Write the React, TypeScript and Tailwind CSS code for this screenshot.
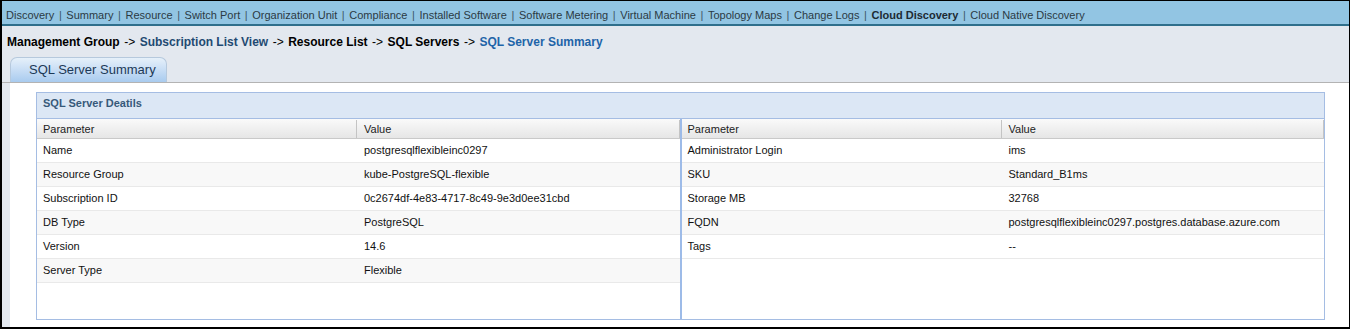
import React from 'react';

const navItems = [
  'Discovery',
  'Summary',
  'Resource',
  'Switch Port',
  'Organization Unit',
  'Compliance',
  'Installed Software',
  'Software Metering',
  'Virtual Machine',
  'Topology Maps',
  'Change Logs',
  'Cloud Discovery',
  'Cloud Native Discovery',
];

const leftRows = [
  ['Name', 'postgresqlflexibleinc0297'],
  ['Resource Group', 'kube-PostgreSQL-flexible'],
  ['Subscription ID', '0c2674df-4e83-4717-8c49-9e3d0ee31cbd'],
  ['DB Type', 'PostgreSQL'],
  ['Version', '14.6'],
  ['Server Type', 'Flexible'],
];

const rightRows = [
  ['Administrator Login', 'ims'],
  ['SKU', 'Standard_B1ms'],
  ['Storage MB', '32768'],
  ['FQDN', 'postgresqlflexibleinc0297.postgres.database.azure.com'],
  ['Tags', '--'],
];

const DetailTable = ({ rows }: { rows: string[][] }) => (
  <div className="flex-1 flex flex-col bg-white">
    {/* header row */}
    <div className="flex h-[20px] border-b border-[#c9c9c9] bg-gradient-to-b from-[#fafafa] to-[#e6e6e6] text-[#222] pt-[1px]">
      <div className="w-[320px] pl-[6px] flex items-center border-r border-[#c4c4c4]">Parameter</div>
      <div className="flex-1 pl-[7px] flex items-center border-r border-[#c4c4c4]">Value</div>
    </div>
    {rows.map(([k, v], i) => (
      <div
        key={k}
        className={`flex h-[24px] items-center pb-[1px] border-b border-[#e9e9e9] text-[#111] ${i % 2 === 1 ? 'bg-[#f8f8f8]' : 'bg-white'}`}
      >
        <div className="w-[320px] pl-[6px]">{k}</div>
        <div className="flex-1 pl-[7px]">{v}</div>
      </div>
    ))}
  </div>
);

export default function App() {
  return (
    <div
      className="w-[1350px] h-[329px] overflow-hidden bg-[#e3e8ef] border-l-2 border-t border-r border-b-2 border-black flex flex-col"
      style={{ fontFamily: '"Liberation Sans", Arial, sans-serif' }}
    >
      {/* Top nav */}
      <div className="h-[25px] shrink-0 bg-[#92c5e3] border-b-2 border-[#2f6f8c] flex items-center pt-[5px] pl-[4px] text-[11px] text-[#2b3a44]">
        {navItems.map((item, i) => (
          <React.Fragment key={item}>
            {i > 0 && <span className="px-[4.6px] text-[#3d5566]">|</span>}
            <span className={item === 'Cloud Discovery' ? 'font-bold text-[#1d2a33]' : ''}>{item}</span>
          </React.Fragment>
        ))}
      </div>

      {/* Breadcrumb */}
      <div className="h-[31px] shrink-0 flex items-center pl-[5px] pt-[1px] text-[12px] font-bold gap-[4.5px]">
        <span className="text-black">Management Group</span>
        <span className="font-normal">-&gt;</span>
        <span className="text-[#1f4a72]">Subscription List View</span>
        <span className="font-normal">-&gt;</span>
        <span className="text-black">Resource List</span>
        <span className="font-normal">-&gt;</span>
        <span className="text-black">SQL Servers</span>
        <span className="font-normal">-&gt;</span>
        <span className="text-[#1e64a8]">SQL Server Summary</span>
      </div>

      {/* Tab strip */}
      <div className="h-[26px] shrink-0 pl-[8px] flex items-end border-b border-[#b3b3b3]">
        <div className="w-[157px] h-[25px] rounded-t-[7px] border border-b-0 border-[#b6c9dd] bg-gradient-to-b from-[#e6f0fa] to-[#a9cbef] text-[13px] text-[#1c3957] flex items-center pl-[18px]">
          SQL Server Summary
        </div>
      </div>

      {/* Content */}
      <div className="flex-1 ml-[8px] bg-white pt-[9px] pl-[26px] pr-[24px] pb-[7px] flex">
        <div className="flex-1 flex flex-col border border-[#a5bde3] text-[11px]">
          <div className="h-[26px] shrink-0 bg-[#dce7f5] border-b border-[#a5bde3] flex items-center pb-[5px] pl-[6px] font-bold text-[#37597a]">
            SQL Server Deatils
          </div>
          <div className="flex-1 flex">
            <DetailTable rows={leftRows} />
            <div className="w-[2px] bg-[#9dbbe8]" />
            <DetailTable rows={rightRows} />
          </div>
        </div>
      </div>
    </div>
  );
}
